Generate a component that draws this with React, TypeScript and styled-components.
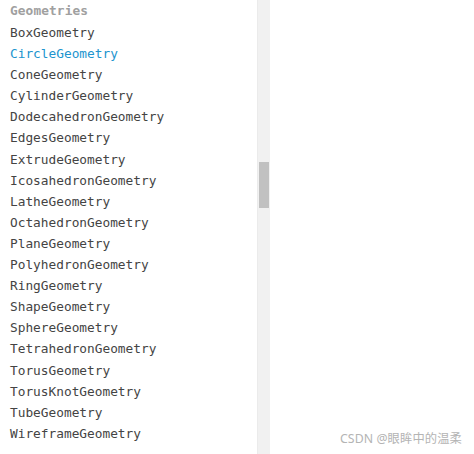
import React from "react";
import styled, { createGlobalStyle } from "styled-components";

const Global = createGlobalStyle`
  html, body { margin: 0; padding: 0; background: #fff; }
  body { width: 474px; height: 454px; overflow: hidden; }
`;

const Page = styled.div`
  display: flex;
  width: 474px;
  height: 454px;
  position: relative;
`;

const Sidebar = styled.div`
  display: flex;
  width: 270px;
  height: 454px;
`;

const List = styled.div`
  flex: 1;
  padding: 1px 0 0 10px;
  display: flex;
  flex-direction: column;
  font-family: "DejaVu Sans Mono", "Liberation Mono", monospace;
  font-size: 12.8px;
  line-height: 21.1px;
`;

const Heading = styled.div`
  color: #a0a0a0;
  font-weight: bold;
  height: 21px;
  line-height: 20px;
  letter-spacing: 0.1px;
`;

const Item = styled.div<{ $active?: boolean }>`
  color: ${(p) => (p.$active ? "#2194ce" : "#444")};
  white-space: nowrap;
`;

const Track = styled.div`
  width: 13px;
  height: 454px;
  background: #f1f1f1;
  border-left: 1px solid #ebebeb;
  box-sizing: border-box;
  display: flex;
  flex-direction: column;
  align-items: center;
`;

const Thumb = styled.div`
  width: 10px;
  height: 46px;
  margin-top: 162px;
  background: #c1c1c1;
`;

const Watermark = styled.div`
  position: absolute;
  right: 12px;
  bottom: 7px;
  font-family: "Noto Sans", "Noto Sans CJK SC", sans-serif;
  font-size: 12.3px;
  color: #b4b4b4;
  letter-spacing: 0.1px;
`;

const items = [
  "BoxGeometry",
  "CircleGeometry",
  "ConeGeometry",
  "CylinderGeometry",
  "DodecahedronGeometry",
  "EdgesGeometry",
  "ExtrudeGeometry",
  "IcosahedronGeometry",
  "LatheGeometry",
  "OctahedronGeometry",
  "PlaneGeometry",
  "PolyhedronGeometry",
  "RingGeometry",
  "ShapeGeometry",
  "SphereGeometry",
  "TetrahedronGeometry",
  "TorusGeometry",
  "TorusKnotGeometry",
  "TubeGeometry",
  "WireframeGeometry",
];

export default function App() {
  return (
    <Page>
      <Global />
      <Sidebar>
        <List>
          <Heading>Geometries</Heading>
          {items.map((name) => (
            <Item key={name} $active={name === "CircleGeometry"}>
              {name}
            </Item>
          ))}
        </List>
        <Track>
          <Thumb />
        </Track>
      </Sidebar>
      <Watermark>CSDN @眼眸中的温柔</Watermark>
    </Page>
  );
}
